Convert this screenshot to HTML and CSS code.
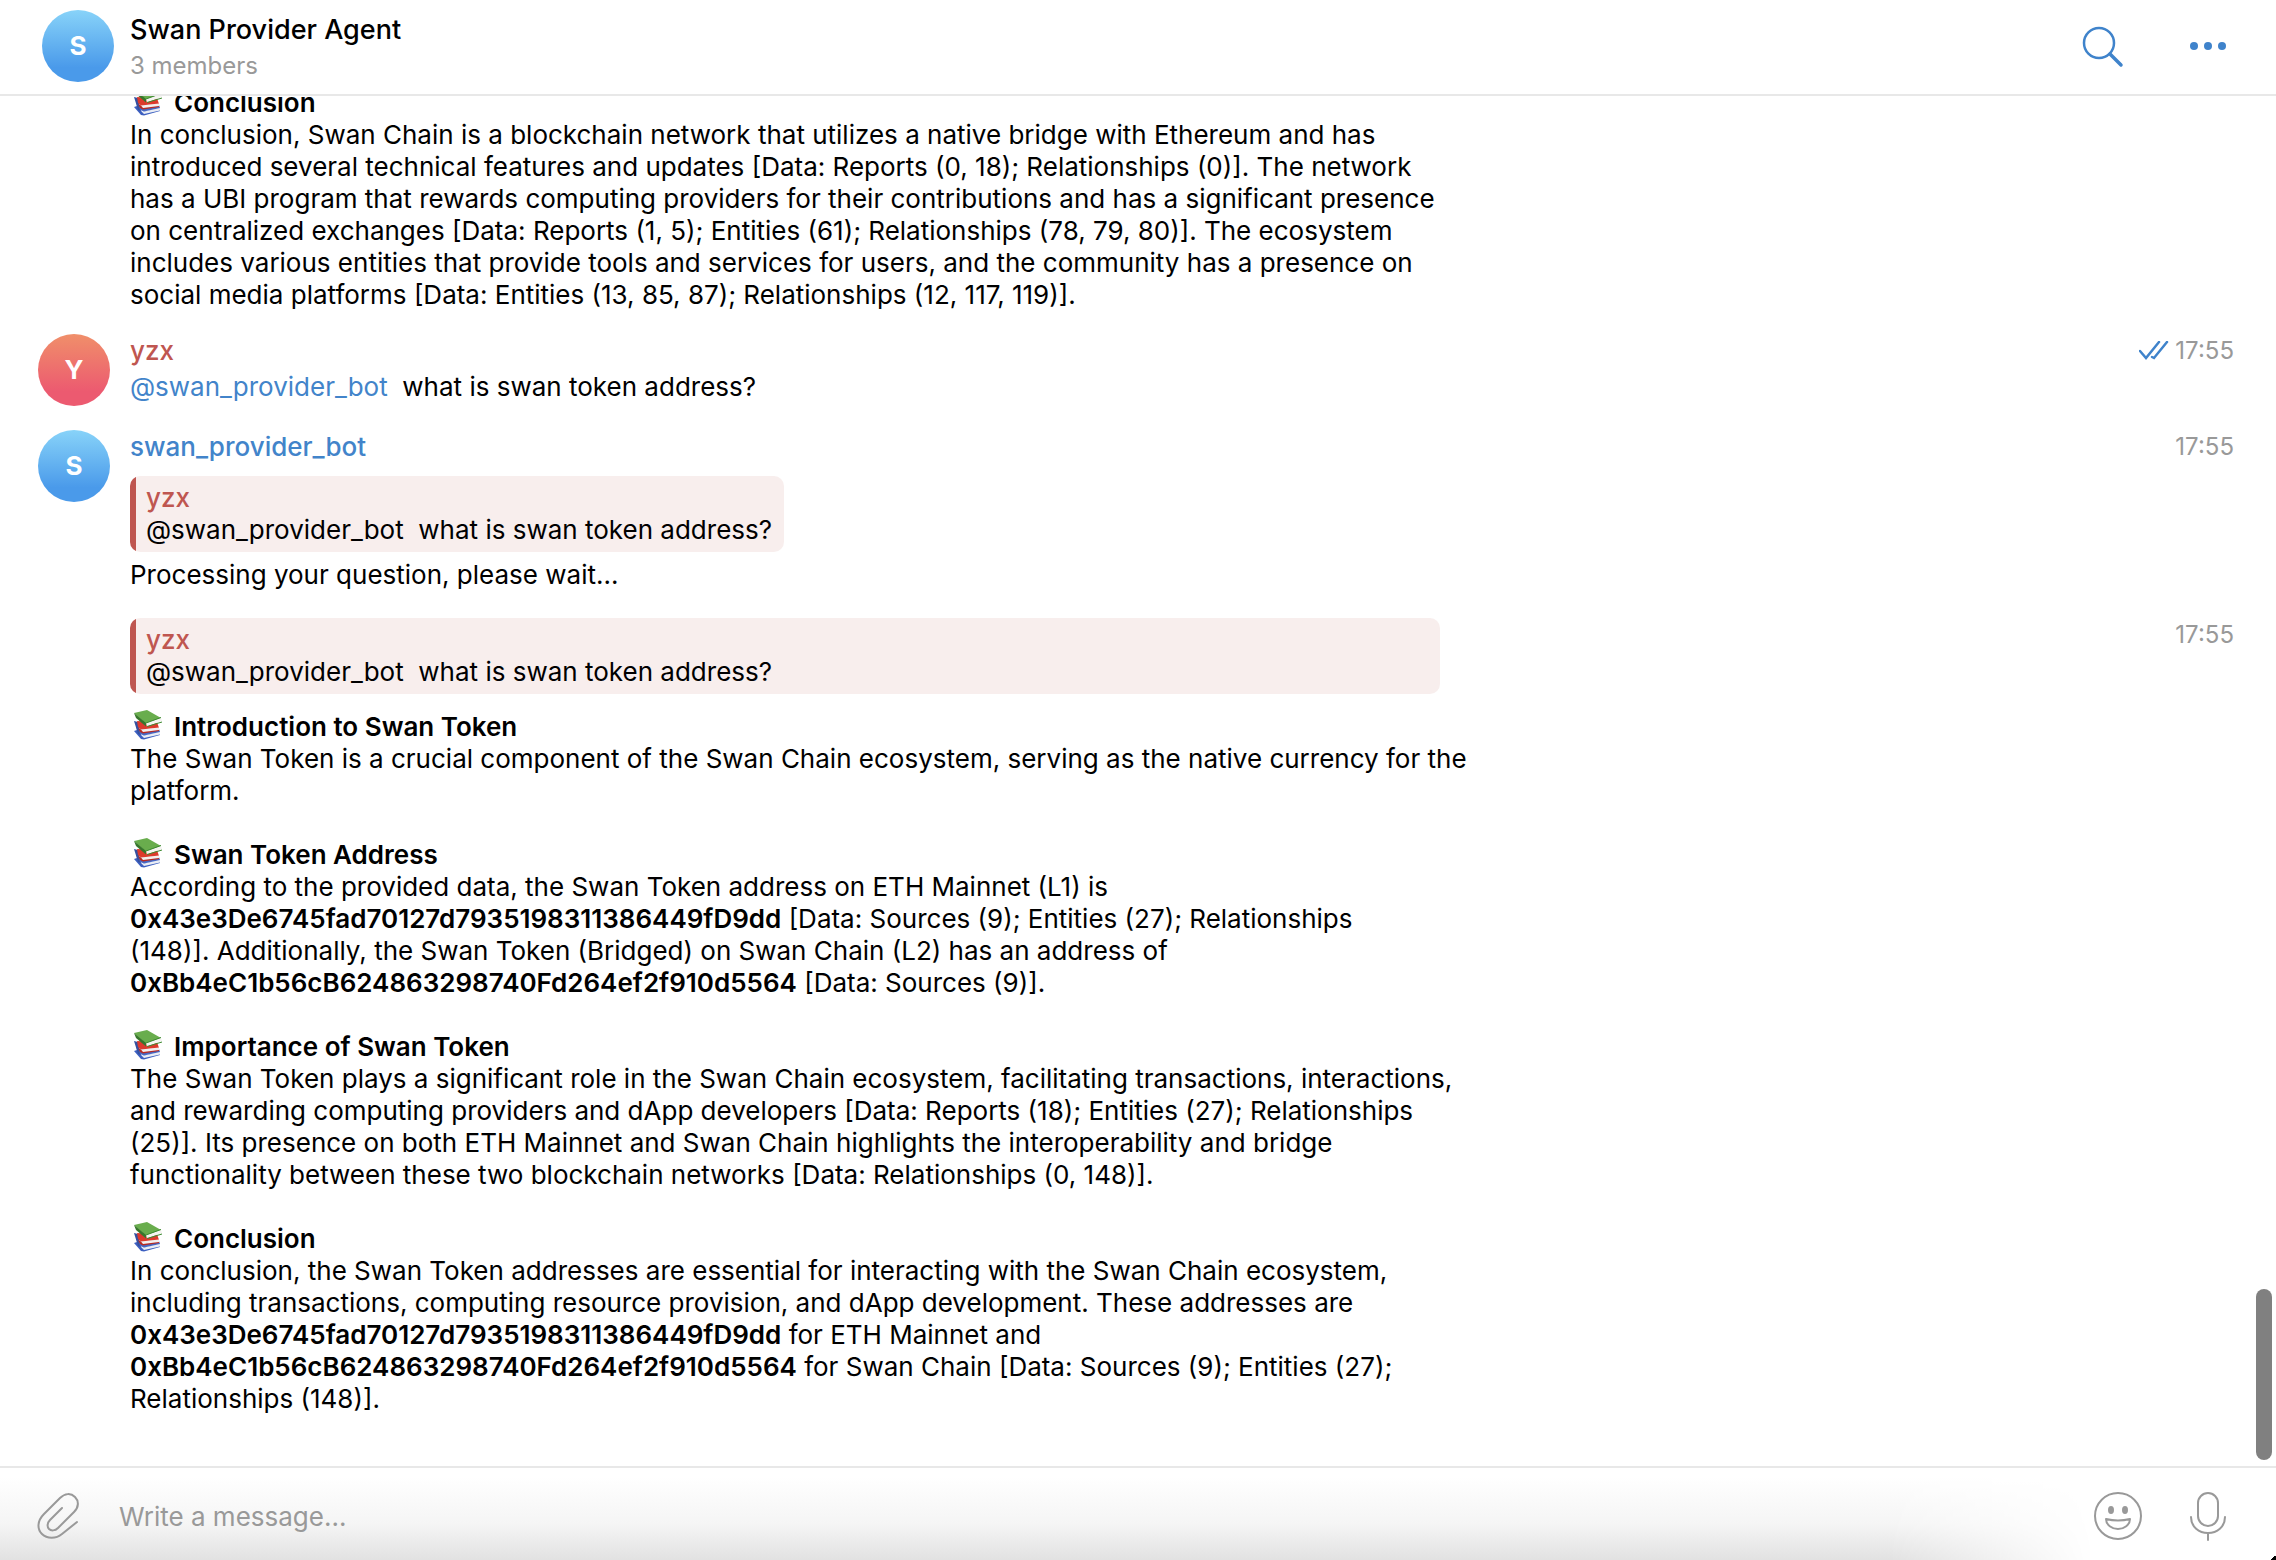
FILE: index.html
```html
<!DOCTYPE html>
<html lang="en">
<head>
    <meta charset="UTF-8">
    <meta name="viewport" content="width=device-width, initial-scale=1.0">
    <title>Swan Provider Agent</title>
    <link rel="stylesheet" href="styles.css">
</head>
<body>
    <svg class="sprite" aria-hidden="true">
        <symbol id="books" viewBox="0 0 30 30">
            <path d="M1 21 L4 20 L9 26 L27 23 V25 L11 29.500 L8 29 Z" fill="#3c5fc0"/>
            <path d="M9 26 L27 22 V24.500 L11 28 Z" fill="#e9edf5"/>
            <path d="M1 11 L5 12 L8 25 L5 24 Z" fill="#35509f"/>
            <path d="M6 20 L26 19 L27 22 L11 25.500 L7 24 Z" fill="#4668c4"/>
            <path d="M4 11 L24 12 L26 18 L8 19.500 L5 17 Z" fill="#dd3a2c"/>
            <path d="M5 18 L8 19.500 L26 18 V21 L10 23.500 L7 22 Z" fill="#b82a22"/>
            <path d="M8 19.500 L26 17.500 V20 L10 22 Z" fill="#f3eeee"/>
            <path d="M1 3 L14 0 L28 8 L13 14 Z" fill="#69ad4d"/>
            <path d="M1 3 L13 13 L13 16.500 L3 8 Z" fill="#37762c"/>
            <path d="M13 13 L28 8 L29 11 L14 16.500 Z" fill="#f4f4f0"/>
            <path d="M13 13 L28 7.500 M14 16.500 L29 12" stroke="#3c8a30" fill="none"/>
        </symbol>
    </svg>

    <header class="header">
        <div class="avatar avatar-blue">S</div>
        <div class="chat-info">
            <h1>Swan Provider Agent</h1>
            <p>3 members</p>
        </div>
        <button class="icon-button" aria-label="Search">
            <svg width="44" height="44" viewBox="0 0 44 44" fill="none" stroke="#3f83cb" stroke-linecap="round">
                <circle cx="19" cy="19" r="15" stroke-width="2.500"/>
                <path d="M30 30 L41 41" stroke-width="3.500"/>
            </svg>
        </button>
        <button class="icon-button" aria-label="More">
            <svg width="44" height="44" viewBox="0 0 44 44" fill="#3f83cb">
                <circle cx="8" cy="22" r="4"/>
                <circle cx="22" cy="22" r="4"/>
                <circle cx="36" cy="22" r="4"/>
            </svg>
        </button>
    </header>

    <main class="chat">
        <article class="message message-long">
            <div class="content">
                <h2><svg class="books"><use href="#books"/></svg>Conclusion</h2>
                <p>In conclusion, Swan Chain is a blockchain network that utilizes a native bridge with Ethereum and has<br>
                introduced several technical features and updates [Data: Reports (0, 18); Relationships (0)]. The network<br>
                has a UBI program that rewards computing providers for their contributions and has a significant presence<br>
                on centralized exchanges [Data: Reports (1, 5); Entities (61); Relationships (78, 79, 80)]. The ecosystem<br>
                includes various entities that provide tools and services for users, and the community has a presence on<br>
                social media platforms [Data: Entities (13, 85, 87); Relationships (12, 117, 119)].</p>
            </div>
        </article>

        <article class="message">
            <div class="avatar avatar-red">Y</div>
            <div class="content">
                <div class="author red">yzx</div>
                <p><a href="#">@swan_provider_bot</a>&nbsp; what is swan token address?</p>
            </div>
            <div class="meta">
                <svg width="30" height="20" viewBox="0 0 30 20" fill="none" stroke="#3f83cb" stroke-width="2.500" stroke-linecap="round">
                    <path d="M1 10 L7 17 L20 1 M13 16 L15 17 L28 1"/>
                </svg>
                <time>17:55</time>
            </div>
        </article>

        <article class="message">
            <div class="avatar avatar-blue">S</div>
            <div class="content">
                <div class="author blue">swan_provider_bot</div>
                <blockquote class="quote quote-small">
                    <div class="red">yzx</div>
                    <div>@swan_provider_bot&nbsp; what is swan token address?</div>
                </blockquote>
                <p>Processing your question, please wait...</p>
            </div>
            <div class="meta"><time>17:55</time></div>
        </article>

        <article class="message message-long">
            <div class="content">
                <blockquote class="quote">
                    <div class="red">yzx</div>
                    <div>@swan_provider_bot&nbsp; what is swan token address?</div>
                </blockquote>
                <h2><svg class="books"><use href="#books"/></svg>Introduction to Swan Token</h2>
                <p>The Swan Token is a crucial component of the Swan Chain ecosystem, serving as the native currency for the<br>
                platform.</p>
                <h2><svg class="books"><use href="#books"/></svg>Swan Token Address</h2>
                <p>According to the provided data, the Swan Token address on ETH Mainnet (L1) is<br>
                <b>0x43e3De6745fad70127d7935198311386449fD9dd</b> [Data: Sources (9); Entities (27); Relationships<br>
                (148)]. Additionally, the Swan Token (Bridged) on Swan Chain (L2) has an address of<br>
                <b>0xBb4eC1b56cB624863298740Fd264ef2f910d5564</b> [Data: Sources (9)].</p>
                <h2><svg class="books"><use href="#books"/></svg>Importance of Swan Token</h2>
                <p>The Swan Token plays a significant role in the Swan Chain ecosystem, facilitating transactions, interactions,<br>
                and rewarding computing providers and dApp developers [Data: Reports (18); Entities (27); Relationships<br>
                (25)]. Its presence on both ETH Mainnet and Swan Chain highlights the interoperability and bridge<br>
                functionality between these two blockchain networks [Data: Relationships (0, 148)].</p>
                <h2><svg class="books"><use href="#books"/></svg>Conclusion</h2>
                <p>In conclusion, the Swan Token addresses are essential for interacting with the Swan Chain ecosystem,<br>
                including transactions, computing resource provision, and dApp development. These addresses are<br>
                <b>0x43e3De6745fad70127d7935198311386449fD9dd</b> for ETH Mainnet and<br>
                <b>0xBb4eC1b56cB624863298740Fd264ef2f910d5564</b> for Swan Chain [Data: Sources (9); Entities (27);<br>
                Relationships (148)].</p>
            </div>
            <div class="meta"><time>17:55</time></div>
        </article>

        <div class="scroll-thumb"></div>
    </main>

    <footer class="composer">
        <button class="icon-button" aria-label="Attach file">
            <svg width="44" height="50" viewBox="0 0 44 50" fill="none" stroke="#999999" stroke-width="2" stroke-linecap="round" stroke-linejoin="round">
                <path d="M25 17 L13 29 C10 32 10 36 12 38 C14 40 18 40 21 37 L37 21 C42 16 42 10 38 6 C34 2 28 2 23 7 L7 23 C0 30 0 38 5 43 C10 48 19 48 25 43 L40 31"/>
            </svg>
        </button>
        <input type="text" class="message-input" placeholder="Write a message..." aria-label="Message">
        <button class="icon-button" aria-label="Emoji">
            <svg width="50" height="50" viewBox="0 0 50 50" fill="none" stroke="#999999" stroke-width="2" stroke-linejoin="round">
                <circle cx="25" cy="25" r="23"/>
                <ellipse cx="18" cy="19" rx="3" ry="4" fill="#999999" stroke="none"/>
                <ellipse cx="32" cy="19" rx="3" ry="4" fill="#999999" stroke="none"/>
                <path d="M13 28 Q25 31 37 28 C37 34 31 38 25 38 C19 38 13 34 13 28 Z"/>
            </svg>
        </button>
        <button class="icon-button" aria-label="Record voice message">
            <svg width="44" height="50" viewBox="0 0 44 50" fill="none" stroke="#999999" stroke-width="2" stroke-linecap="round">
                <rect x="12" y="2" width="20" height="33" rx="10"/>
                <path d="M5 26 C5 36 13 42 22 42 C31 42 39 36 39 26 M22 42 V49"/>
            </svg>
        </button>
    </footer>
</body>
</html>
```
FILE: styles.css
```css
* {
    box-sizing: border-box;
}

body {
    margin: 0;
    height: 100vh;
    display: flex;
    flex-direction: column;
    background: #ffffff;
    color: #000000;
    font-family: Inter, "Liberation Sans", sans-serif;
    font-size: 26px;
    line-height: 32px;
}

h1, h2, p, blockquote {
    margin: 0;
}

a, .blue {
    color: #4284ca;
    text-decoration: none;
}

.red {
    color: #bf5650;
}

b {
    font-weight: 600;
}

.sprite {
    position: absolute;
    width: 0;
    height: 0;
}

.header {
    display: flex;
    align-items: center;
    flex: none;
    height: 96px;
    padding: 0 46px 2px 42px;
    border-bottom: 2px solid #e8e8e8;
}

.chat-info {
    flex: 1;
    margin-left: 16px;
    padding-top: 4px;
}

.chat-info h1 {
    font-size: 27px;
    font-weight: 500;
    line-height: 36px;
}

.chat-info p {
    color: #999999;
    font-size: 24px;
    line-height: 36px;
}

.icon-button {
    display: flex;
    padding: 0;
    border: none;
    background: none;
    cursor: pointer;
}

.header .icon-button {
    margin-left: 62px;
}

.avatar {
    display: flex;
    flex: none;
    align-items: center;
    justify-content: center;
    width: 72px;
    height: 72px;
    border-radius: 50%;
    color: #ffffff;
    font-size: 26px;
    font-weight: 700;
}

.avatar-blue {
    background: linear-gradient(#88d3f9, #4a9aea 80%);
}

.avatar-red {
    background: linear-gradient(#f08f6a, #ec5a70 80%);
}

.chat {
    position: relative;
    display: flex;
    flex: 1;
    flex-direction: column;
    justify-content: flex-end;
    min-height: 0;
    padding-bottom: 28px;
    overflow: hidden;
}

.message {
    position: relative;
    display: flex;
    flex: none;
    justify-content: space-between;
    padding: 0 42px 27px 130px;
}

.message-long {
    padding-bottom: 23px;
}

.message .avatar {
    position: absolute;
    left: 38px;
    top: 0;
}

.content {
    white-space: nowrap;
}

.author {
    margin-bottom: 3px;
    font-weight: 500;
    line-height: 34px;
}

.quote {
    max-width: 1310px;
    padding: 6px 12px 6px 16px;
    border-radius: 10px;
    background: linear-gradient(to right, #bf5650 6px, #f8eeed 6px);
}

.quote .red {
    font-weight: 500;
}

.quote-small {
    width: fit-content;
    margin: 12px 0 7px;
}

.content h2 {
    display: flex;
    align-items: center;
    height: 32px;
    font-size: 26px;
    font-weight: 600;
    line-height: 32px;
}

.quote + h2 {
    margin-top: 17px;
}

p + h2 {
    margin-top: 32px;
}

.books {
    width: 30px;
    height: 30px;
    margin: 0 11px 4px 3px;
}

.meta {
    display: flex;
    align-items: center;
    gap: 6px;
    height: 34px;
    color: #999999;
    font-size: 24px;
}

.scroll-thumb {
    position: absolute;
    right: 4px;
    bottom: 6px;
    width: 16px;
    height: 171px;
    border-radius: 8px;
    background: #808080;
}

.composer {
    position: relative;
    display: flex;
    flex: none;
    align-items: center;
    height: 94px;
    padding: 4px 46px 0 37px;
    border-top: 2px solid #e8e8e8;
    background: linear-gradient(135deg, transparent 50%, #000000 50%) right bottom / 5px 5px no-repeat;
}

/* soft shade along the bottom edge */
.composer::before {
    content: "";
    position: absolute;
    inset: 0;
    z-index: -1;
    background: linear-gradient(#ffffff 10%, #f5f5f5 60%, #e2e2e2);
    mask-image: linear-gradient(to right, #000000 83%, transparent 92%);
}

.message-input {
    flex: 1;
    min-width: 0;
    margin-left: 38px;
    padding: 0;
    border: none;
    outline: none;
    background: none;
    font-family: inherit;
    font-size: 26px;
}

.message-input::placeholder {
    color: #999999;
}

.composer .icon-button + .icon-button {
    margin-left: 43px;
}
```
